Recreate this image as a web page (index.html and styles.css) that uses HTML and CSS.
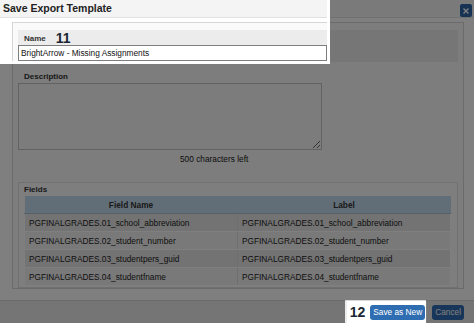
FILE: index.html
```html
<!DOCTYPE html>
<html lang="en">
  <head>
    <meta charset="UTF-8" />
    <title>Save Export Template</title>
    <link rel="stylesheet" href="styles.css">
  </head>
  <body>
    <div class="dialog">
      <div class="titlebar">
        <span class="title">Save Export Template</span>
        <button type="button" class="close" title="Close">
          <svg width="6" height="6" viewBox="0 0 6 6"><path d="M0.5 0.5L5.5 5.5M5.5 0.5L0.5 5.5" stroke="#fff" stroke-width="1.4"/></svg>
        </button>
      </div>

      <div class="content">
        <div class="panel">
          <div class="name-box">
            <div class="name-head">
              <label for="templateName">Name</label>
              <span class="step">11</span>
            </div>
            <input type="text" id="templateName" class="name-input" value="BrightArrow - Missing Assignments" />
          </div>

          <label class="section-label" for="description">Description</label>
          <textarea id="description" class="description"></textarea>
          <div class="chars-left">500 characters left</div>

          <div class="fields-box">
            <div class="section-label">Fields</div>
            <table class="fields">
              <tr>
                <th>Field Name</th>
                <th>Label</th>
              </tr>
              <tr>
                <td>PGFINALGRADES.01_school_abbreviation</td>
                <td>PGFINALGRADES.01_school_abbreviation</td>
              </tr>
              <tr>
                <td>PGFINALGRADES.02_student_number</td>
                <td>PGFINALGRADES.02_student_number</td>
              </tr>
              <tr>
                <td>PGFINALGRADES.03_studentpers_guid</td>
                <td>PGFINALGRADES.03_studentpers_guid</td>
              </tr>
              <tr>
                <td>PGFINALGRADES.04_studentfname</td>
                <td>PGFINALGRADES.04_studentfname</td>
              </tr>
            </table>
          </div>
        </div>
      </div>

      <div class="buttons">
        <span class="callout">
          <span class="step">12</span>
          <button type="button" class="btn">Save as New</button>
        </span>
        <button type="button" class="btn">Cancel</button>
      </div>

      <!-- dim everything except the two highlighted spots -->
      <svg class="shade" width="474" height="323" viewBox="0 0 474 323">
        <path fill="#000" fill-opacity="0.5" fill-rule="evenodd"
              d="M0 0H474V323H0Z M0 0V64H330V0Z M345 300V323H426V300Z" />
        <path fill="#fff" fill-rule="evenodd"
              d="M0 0H330V64H0Z M0 0V61H327V0Z" />
      </svg>
    </div>
  </body>
</html>
```

FILE: styles.css
```css
body {
  margin: 0;
  background: #fff;
  font-family: "Liberation Sans", Arial, sans-serif;
  color: #222;
}

.dialog {
  position: relative;
  width: 474px;
  height: 323px;
  overflow: hidden;
  display: flex;
  flex-direction: column;
  background: #fff;
}

.titlebar {
  height: 17px;
  flex: none;
  display: flex;
  justify-content: space-between;
  align-items: flex-start;
  background: #f4f4f4;
  border-bottom: 1px solid #e2e2e2;
}

.title {
  font-size: 10.5px;
  font-weight: bold;
  line-height: 16px;
  padding-left: 3px;
  color: #222;
}

.close {
  width: 12px;
  height: 13px;
  margin: 4px 2px 0 0;
  padding: 0;
  border: 0;
  border-radius: 2px;
  background: #2f66a8;
  display: flex;
  align-items: center;
  justify-content: center;
}

.content {
  height: 282px;
  flex: none;
  padding: 4px 10px 0 12px;
  box-sizing: border-box;
}

.panel {
  height: 267px;
  box-sizing: border-box;
  border: 1px solid #d6d6d6;
  background: #fafafa;
  padding: 7px 5px 0 5px;
  display: flex;
  flex-direction: column;
  align-items: flex-start;
}

.name-box {
  width: 100%;
  height: 32px;
  background: #ececec;
}

.name-head {
  height: 15px;
  display: flex;
  align-items: center;
  padding-left: 6px;
}

.name-head label {
  font-size: 8px;
  font-weight: bold;
  color: #333;
  margin-top: 2px;
}

.step {
  font-size: 14px;
  font-weight: bold;
  color: #1b2633;
  line-height: 14px;
}

.name-head .step {
  margin-left: 10px;
}

.name-input {
  display: block;
  width: 309px;
  height: 16px;
  box-sizing: border-box;
  margin: 0;
  padding: 0 2px;
  border: 1px solid #7e7e7e;
  background: #fff;
  font-family: "Liberation Sans", Arial, sans-serif;
  font-size: 8.3px;
  color: #111;
}

.section-label {
  display: block;
  height: 13px;
  line-height: 13px;
  padding-left: 6px;
  font-size: 8px;
  font-weight: bold;
  color: #333;
}

.panel > .section-label {
  margin-top: 8px;
}

.description {
  display: block;
  width: 304px;
  height: 68px;
  box-sizing: border-box;
  margin: 0;
  border: 1px solid #c4c4c4;
  background: #f8f8f8;
  resize: vertical;
}

.chars-left {
  margin: 4px 0 0 162px;
  height: 10px;
  line-height: 10px;
  font-size: 8.3px;
  color: #222;
}

.fields-box {
  width: 100%;
  margin-top: 18px;
  box-sizing: border-box;
  border: 1px solid #e0e0e0;
  background: #fcfcfc;
  padding: 0 6px 1px 5px;
}

.fields-box .section-label {
  padding-left: 0;
}

.fields {
  width: 100%;
  border-collapse: collapse;
  font-size: 8.3px;
}

.fields th {
  height: 17px;
  padding: 0;
  background: #c3dcef;
  border-bottom: 1px solid #a9c2d6;
  font-weight: bold;
  color: #333;
  text-align: center;
}

.fields td {
  height: 17px;
  padding: 0 0 0 4px;
  border: 1px solid #fff;
  border-right-color: #dcdcdc;
  color: #222;
  white-space: nowrap;
}

.fields td:last-child {
  border-right-color: #fff;
}

.fields tr:nth-child(even) td {
  background: #e6e6e6;
}

.fields tr:nth-child(odd) td {
  background: #f3f3f3;
}

.buttons {
  height: 23px;
  flex: none;
  box-sizing: border-box;
  border-top: 1px solid #d6d6d6;
  background: #ebebeb;
  display: flex;
  justify-content: flex-end;
  align-items: stretch;
  padding-right: 10px;
}

.callout {
  display: flex;
  align-items: center;
  gap: 5px;
  background: #fff;
  padding: 0 2px 0 3px;
  margin-right: 5px;
}

.buttons > .btn {
  align-self: center;
}

.btn {
  height: 15px;
  margin: 0;
  padding: 0 3px;
  border: 0;
  border-radius: 3px;
  background: #2f6db2;
  color: #fff;
  font-family: "Liberation Sans", Arial, sans-serif;
  font-size: 8.3px;
  line-height: 15px;
}

.shade {
  position: absolute;
  left: 0;
  top: 0;
  pointer-events: none;
}
```
